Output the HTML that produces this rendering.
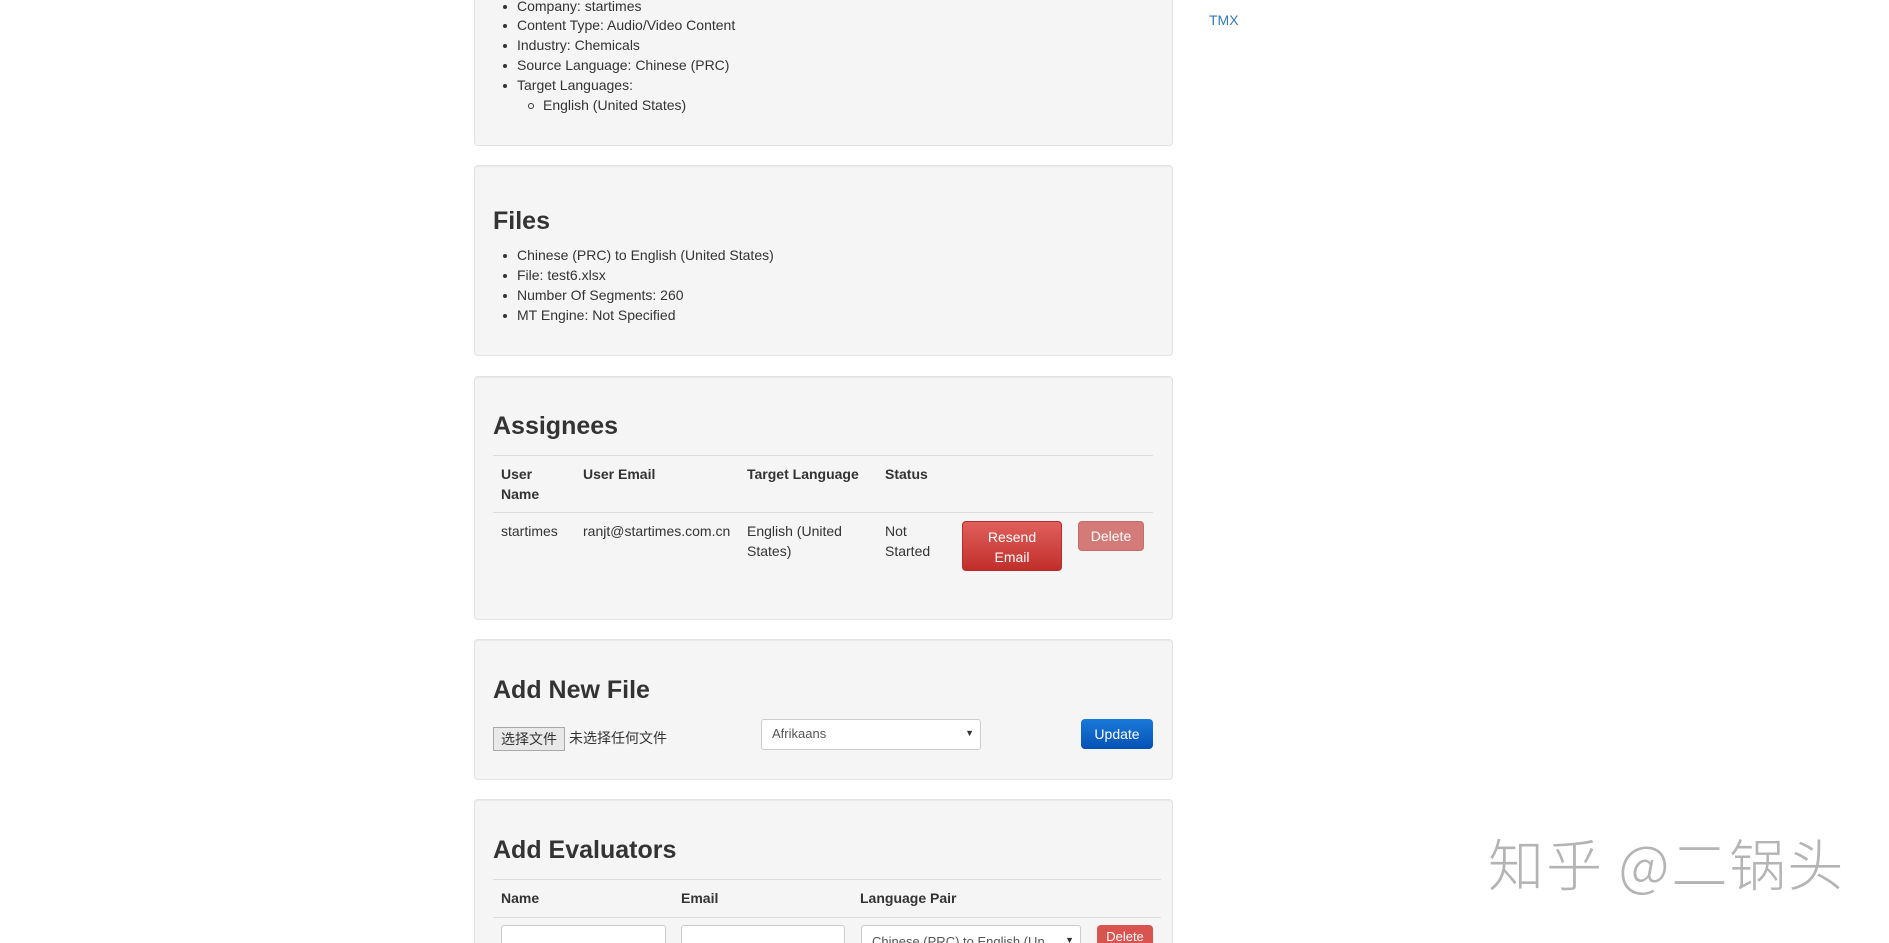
<!DOCTYPE html>
<html><head><meta charset="utf-8"><style>
html{overflow:hidden;height:943px}
body{margin:0;width:1889px;height:943px;background:#fff;font-family:"Liberation Sans","Noto Sans CJK SC",sans-serif;color:#333;position:relative;overflow:hidden;font-size:14px}
.a{position:absolute;white-space:nowrap}
.p{position:absolute;left:474px;width:697px;background:#f5f5f5;border:1px solid #e3e3e3;border-radius:4px;box-shadow:inset 0 1px 1px rgba(0,0,0,.05)}
h3{position:absolute;margin:0;font-size:25px;font-weight:bold;color:#333;left:18px;line-height:30px}
.li{position:absolute;left:517px;font-size:14px;line-height:20px}
.dot{position:absolute;width:4px;height:4px;border-radius:50%;background:#333}
.line{position:absolute;height:1px;background:#ddd}
.th{position:absolute;font-weight:bold;font-size:14px;line-height:20px}
.td{position:absolute;font-size:14px;line-height:20px}
.btn{position:absolute;color:#fff;text-align:center;border-radius:4px;font-size:14px;line-height:20px}
.inp{position:absolute;background:#fff;border:1px solid #ccc;border-radius:3px}
</style></head><body>
<div class="p" style="top:-10px;height:154px"></div>
<div class="dot" style="left:503px;top:5px"></div><div class="li" style="top:-4px">Company: startimes</div>
<div class="dot" style="left:503px;top:24px"></div><div class="li" style="top:15px">Content Type: Audio/Video Content</div>
<div class="dot" style="left:503px;top:44px"></div><div class="li" style="top:35px">Industry: Chemicals</div>
<div class="dot" style="left:503px;top:64px"></div><div class="li" style="top:55px">Source Language: Chinese (PRC)</div>
<div class="dot" style="left:503px;top:84px"></div><div class="li" style="top:75px">Target Languages:</div>
<div class="dot" style="left:528px;top:103px;background:none;border:1px solid #333;width:4px;height:4px"></div><div class="li" style="left:543px;top:95px">English (United States)</div>

<a class="a" style="left:1209px;top:12px;color:#337ab7;font-size:14px;text-decoration:none">TMX</a>

<div class="p" style="top:165px;height:189px"><h3 style="top:40px">Files</h3></div>
<div class="dot" style="left:503px;top:254px"></div><div class="li" style="top:245px">Chinese (PRC) to English (United States)</div>
<div class="dot" style="left:503px;top:274px"></div><div class="li" style="top:265px">File: test6.xlsx</div>
<div class="dot" style="left:503px;top:294px"></div><div class="li" style="top:285px">Number Of Segments: 260</div>
<div class="dot" style="left:503px;top:314px"></div><div class="li" style="top:305px">MT Engine: Not Specified</div>

<div class="p" style="top:376px;height:242px"><h3 style="top:34px">Assignees</h3></div>
<div class="line" style="left:493px;width:660px;top:455px"></div>
<div class="th" style="left:501px;top:464px">User<br>Name</div>
<div class="th" style="left:583px;top:464px">User Email</div>
<div class="th" style="left:747px;top:464px">Target Language</div>
<div class="th" style="left:885px;top:464px">Status</div>
<div class="line" style="left:493px;width:660px;top:512px"></div>
<div class="td" style="left:501px;top:521px">startimes</div>
<div class="td" style="left:583px;top:521px">ranjt@startimes.com.cn</div>
<div class="td" style="left:747px;top:521px">English (United<br>States)</div>
<div class="td" style="left:885px;top:521px">Not<br>Started</div>
<div class="btn" style="left:962px;top:521px;width:100px;height:50px;padding-top:5px;box-sizing:border-box;background:linear-gradient(#e0605c,#c12e2a);border:1px solid #b92c28">Resend<br>Email</div>
<div class="btn" style="left:1078px;top:521px;width:66px;height:30px;line-height:28px;background:#d27b78;border:1px solid #c96a67;box-sizing:border-box">Delete</div>

<div class="p" style="top:639px;height:139px"><h3 style="top:35px">Add New File</h3></div>
<div class="a" style="left:493px;top:727px;width:70px;height:22px;background:#e9e9e9;border:1px solid #a9a9a9;font-size:14px;line-height:22px;text-align:center">选择文件</div>
<div class="a" style="left:569px;top:727px;font-size:14px;line-height:22px">未选择任何文件</div>
<div class="inp" style="left:761px;top:719px;width:218px;height:29px"><span class="a" style="left:10px;top:6px;font-size:13px;color:#555">Afrikaans</span><span class="a" style="right:6px;top:8px;font-size:9px">▼</span></div>
<div class="btn" style="left:1081px;top:719px;width:72px;height:30px;line-height:30px;background:linear-gradient(#1a7ad9,#0551b5)">Update</div>

<div class="p" style="top:799px;height:150px"><h3 style="top:35px">Add Evaluators</h3></div>
<div class="line" style="left:493px;width:668px;top:879px"></div>
<div class="th" style="left:501px;top:888px">Name</div>
<div class="th" style="left:681px;top:888px">Email</div>
<div class="th" style="left:860px;top:888px">Language Pair</div>
<div class="line" style="left:493px;width:668px;top:917px"></div>
<div class="inp" style="left:501px;top:925px;width:163px;height:30px"></div>
<div class="inp" style="left:681px;top:925px;width:162px;height:30px"></div>
<div class="inp" style="left:861px;top:925px;width:218px;height:30px;overflow:hidden"><span class="a" style="left:10px;top:8px;font-size:13px;color:#555">Chinese (PRC) to English (Un</span><span class="a" style="right:6px;top:9px;font-size:9px;background:#fff">▼</span></div>
<div class="btn" style="left:1097px;top:925px;width:56px;height:30px;line-height:24px;font-size:13px;background:#d9534f">Delete</div>

<div class="a" style="left:1488px;top:830px;font-size:56px;color:#b4b4b4;font-family:'Noto Sans CJK SC',sans-serif;font-weight:300;line-height:66px;letter-spacing:2px">知乎 @二锅头</div>
</body></html>
